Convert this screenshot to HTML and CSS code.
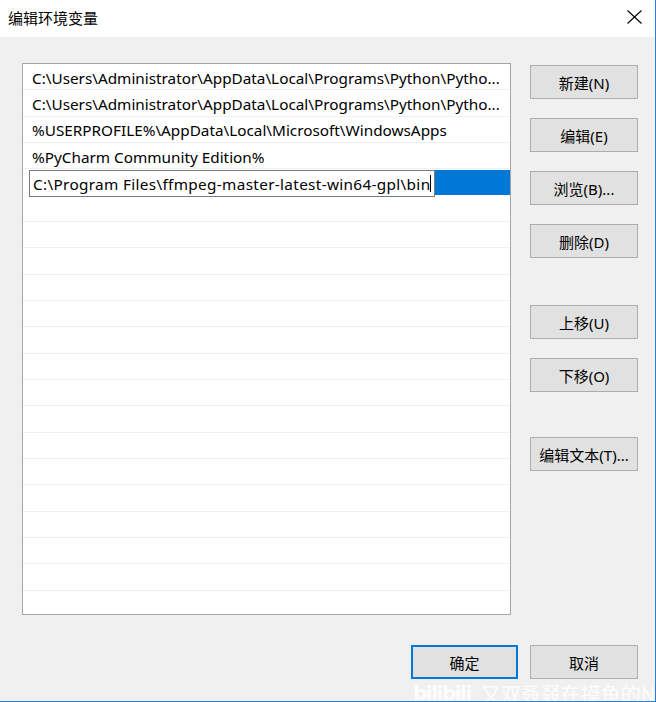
FILE: index.html
```html
<!DOCTYPE html>
<html lang="zh-CN">
<head>
<meta charset="utf-8">
<title>编辑环境变量</title>
<link rel="stylesheet" href="styles.css">
</head>
<body>
<div class="window">
  <div class="titlebar">
    <span class="title">编辑环境变量</span>
    <svg class="close" width="15" height="14" viewBox="0 0 15 14"><path d="M0.5 0.5 L14.5 13.5 M14.5 0.5 L0.5 13.5" stroke="#000" stroke-width="1.1" fill="none"/></svg>
  </div>
  <div class="content">
    <div class="main">
      <div class="list">
        <div class="row"><span class="cell">C:\Users\Administrator\AppData\Local\Programs\Python\Pytho...</span></div>
        <div class="row"><span class="cell">C:\Users\Administrator\AppData\Local\Programs\Python\Pytho...</span></div>
        <div class="row"><span class="cell">%USERPROFILE%\AppData\Local\Microsoft\WindowsApps</span></div>
        <div class="row"><span class="cell">%PyCharm Community Edition%</span></div>
        <div class="row editing">
          <span class="edit-gap"></span>
          <span class="editbox">C:\Program Files\ffmpeg-master-latest-win64-gpl\bin<span class="caret"></span></span>
          <span class="sel"></span>
        </div>
        <div class="row"></div><div class="row"></div><div class="row"></div><div class="row"></div><div class="row"></div>
        <div class="row"></div><div class="row"></div><div class="row"></div><div class="row"></div><div class="row"></div>
        <div class="row"></div><div class="row"></div><div class="row"></div><div class="row"></div><div class="row"></div>
        <div class="row"></div>
      </div>
      <div class="side">
        <button class="btn">新建(N)</button>
        <button class="btn">编辑(E)</button>
        <button class="btn">浏览(B)...</button>
        <button class="btn">删除(D)</button>
        <button class="btn gap-up">上移(U)</button>
        <button class="btn">下移(O)</button>
        <button class="btn gap-text">编辑文本(T)...</button>
      </div>
    </div>
    <div class="footer">
      <button class="btn default">确定</button>
      <button class="btn">取消</button>
    </div>
    <div class="watermark"><span class="bili">bilibili</span><span class="wm-text">又双叒叕在摸鱼的Ne</span></div>
  </div>
</div>
</body>
</html>
```
FILE: styles.css
```css
html, body {
  margin: 0;
  padding: 0;
  background: #f0f0f0;
}
body {
  font-family: "Noto Sans", "Noto Sans CJK SC", sans-serif;
  color: #000;
}
.window {
  width: 655px;
  height: 701px;
  border-right: 1px solid #2b7fd0;
  border-bottom: 1px solid #2b7fd0;
  display: flex;
  flex-direction: column;
  overflow: hidden;
}
.titlebar {
  height: 37px;
  flex: none;
  background: #fff;
  display: flex;
  align-items: center;
  justify-content: space-between;
  padding: 0 13px 0 8px;
}
.title {
  font-family: "Noto Sans CJK SC", sans-serif;
  font-size: 15px;
  margin-top: -3px;
}
.close {
  display: block;
  margin-top: -3px;
}
.content {
  flex: 1;
  background: #f0f0f0;
  position: relative;
  display: flex;
  flex-direction: column;
  padding: 26px 17px 0 22px;
}
.main {
  display: flex;
  gap: 19px;
  align-items: flex-start;
}
.list {
  width: 487px;
  height: 550px;
  background: #fff;
  border: 1px solid #a5a5a5;
  overflow: hidden;
  display: flex;
  flex-direction: column;
}
.row {
  height: 26.33px;
  flex: none;
  box-sizing: border-box;
  border-bottom: 1px solid #f0f0f0;
  display: flex;
  align-items: center;
  font-size: 15.3px;
  white-space: nowrap;
}
.cell {
  padding-left: 9px;
  padding-top: 3px;
  line-height: 1;
}
.row.editing {
  border-bottom-color: transparent;
  align-items: stretch;
  padding-top: 1px;
}
.edit-gap {
  width: 6px;
  flex: none;
}
.editbox {
  box-sizing: border-box;
  height: 27px;
  border: 1px solid #7a7a7a;
  background: #fff;
  padding: 0 2px 0 3px;
  display: flex;
  align-items: center;
  width: 406px;
  flex: none;
  letter-spacing: 0.34px;
  position: relative;
  z-index: 1;
}
.caret {
  display: inline-block;
  width: 1px;
  height: 17px;
  background: #000;
  margin-left: 0;
}
.sel {
  flex: 1;
  background: #0078d7;
}
.side {
  display: flex;
  flex-direction: column;
  gap: 19px;
  padding-top: 2px;
}
.btn {
  width: 108px;
  height: 34px;
  box-sizing: border-box;
  background: #e1e1e1;
  border: 1px solid #adadad;
  font-family: "Noto Sans", "Noto Sans CJK SC", sans-serif;
  font-size: 15px;
  color: #000;
  padding: 0;
  margin: 0;
}
.btn.gap-up {
  margin-top: 28px;
}
.btn.gap-text {
  margin-top: 26px;
}
.footer {
  display: flex;
  justify-content: flex-end;
  gap: 12px;
  margin-top: 30px;
}
.btn.default {
  border: 2px solid #0078d7;
  width: 107px;
}
.watermark {
  position: absolute;
  left: 413px;
  bottom: -3px;
  display: flex;
  align-items: flex-end;
  gap: 10px;
  pointer-events: none;
}
.bili {
  font-family: "DejaVu Sans", sans-serif;
  font-weight: bold;
  font-size: 20px;
  color: rgba(255,255,255,0.92);
  letter-spacing: -1.5px;
  line-height: 1.05;
}
.wm-text {
  font-family: "Noto Sans CJK SC", sans-serif;
  font-size: 20px;
  color: rgba(255,255,255,0.9);
  line-height: 1.05;
  white-space: nowrap;
}
```
